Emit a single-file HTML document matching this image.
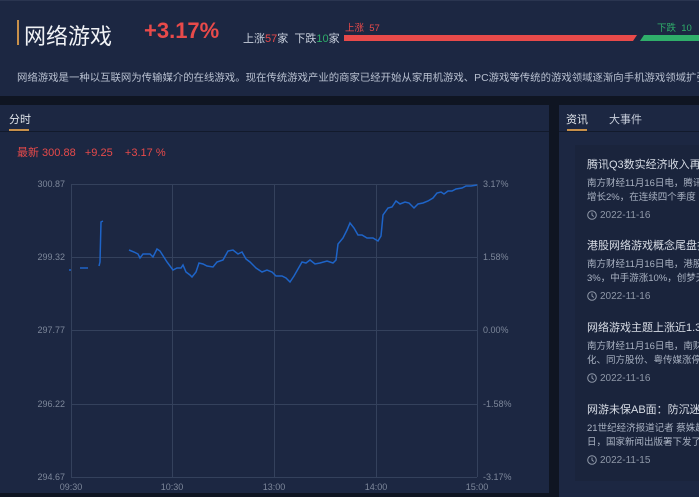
<!DOCTYPE html>
<html><head><meta charset="utf-8"><style>
*{margin:0;padding:0;box-sizing:border-box}
html,body{width:699px;height:497px;overflow:hidden}
body{background:#0f1522;font-family:"Liberation Sans","Noto Sans CJK SC",sans-serif;position:relative;color:#c8cfdc}
.a{position:absolute;white-space:nowrap}
#hdr{left:0;top:0;width:699px;height:96px;background:#1c2742;border-top:1px solid #2a3550}
#lp{left:0;top:105px;width:549px;height:388px;background:#1c2742}
#rp{left:559px;top:105px;width:140px;height:392px;background:#1c2742;overflow:hidden}
.card{left:575px;top:145px;width:124px;height:336px;background:#1a243c}
.t{font-size:11px;color:#d8dde6}
.s{font-size:9.5px;color:#a9b2c2;line-height:14px}
.d{font-size:10px;color:#8f98a8}
.d svg{vertical-align:-2px;margin-right:3px}
</style></head><body>
<div id="hdr" class="a"></div>
<div class="a" style="left:17px;top:20px;width:2px;height:25px;background:#c8904a"></div>
<div class="a" style="left:24px;top:19px;font-size:22px;color:#f0f2f5">网络游戏</div>
<div class="a" style="left:144px;top:18px;font-size:22px;font-weight:bold;color:#e84a4a">+3.17%</div>
<div class="a" style="left:243px;top:30px;font-size:11px;color:#c8cfdc">上涨<span style="color:#e84a4a">57</span>家 &nbsp;下跌<span style="color:#2fae6a">10</span>家</div>
<div class="a" style="left:345px;top:20px;font-size:9.5px;color:#e84a4a">上涨 &nbsp;57</div>
<div class="a" style="left:657px;top:20px;font-size:9.5px;color:#2fae6a">下跌 &nbsp;10</div>
<div class="a" style="left:344px;top:35px;width:293px;height:6px;background:#e84a4a;clip-path:polygon(0 0,100% 0,calc(100% - 4px) 100%,0 100%)"></div>
<div class="a" style="left:640px;top:35px;width:59px;height:6px;background:#2fae6a;clip-path:polygon(4px 0,100% 0,100% 100%,0 100%)"></div>
<div class="a" style="left:17px;top:69px;width:682px;overflow:hidden;font-size:10.4px;color:#b8c0d0">网络游戏是一种以互联网为传输媒介的在线游戏。现在传统游戏产业的商家已经开始从家用机游戏、PC游戏等传统的游戏领域逐渐向手机游戏领域扩张，</div>

<div id="lp" class="a"></div>
<div class="a" style="left:9px;top:111px;font-size:11px;color:#e0e4ea">分时</div>
<div class="a" style="left:9px;top:129px;width:20px;height:2px;background:#c8904a"></div>
<div class="a" style="left:0;top:131px;width:549px;height:1px;background:#121a2c"></div>
<div class="a" style="left:17px;top:144px;font-size:11px;color:#e84a4a">最新 300.88 &nbsp;&nbsp;+9.25 &nbsp;&nbsp;&nbsp;+3.17 %</div>
<svg class="a" style="left:0;top:0" width="549" height="497">
<g stroke="#34415c" stroke-width="1" fill="none">
<line x1="71" y1="184.5" x2="477" y2="184.5"/><line x1="71" y1="257.5" x2="477" y2="257.5"/><line x1="71" y1="330.5" x2="477" y2="330.5"/><line x1="71" y1="404.5" x2="477" y2="404.5"/><line x1="71" y1="477.5" x2="477" y2="477.5"/>
<line x1="71.5" y1="184" x2="71.5" y2="477"/><line x1="172.5" y1="184" x2="172.5" y2="477"/><line x1="274.5" y1="184" x2="274.5" y2="477"/><line x1="376.5" y1="184" x2="376.5" y2="477"/><line x1="477.5" y1="184" x2="477.5" y2="477"/>
</g>
<g stroke="#1e64c8" stroke-width="1.5" fill="none">
<path d="M80 268 L88 268"/>
<path d="M99 266 L100 262 L101 222 L103 221"/>
<path d="M129 250 L134 252 L138 254 L140 258 L143 254 L150 254 L153 257 L157 249 L160 251 L167 262 L173 270 L177 268 L181 268 L183 265 L186 272 L190 275 L192 277 L196 272 L199 263 L203 264 L207 266 L213 267 L217 262 L223 260 L228 251 L233 250 L238 254 L242 252 L246 259 L250 262 L256 268 L262 272 L267 270 L272 272 L276 276 L282 276 L286 278 L290 282 L294 276 L302 262 L306 263 L310 260 L315 264 L320 263 L327 261 L333 263 L336 260 L338 244 L343 238 L347 230 L350 223 L354 228 L358 235 L362 235 L367 238 L373 238 L378 241 L381 236 L383 215 L388 208 L392 207 L396 201 L400 204 L405 202 L409 203 L414 208 L418 204 L423 203 L428 201 L433 198 L437 193 L441 192 L444 194 L448 191 L452 191 L456 189 L462 188 L466 186 L471 186 L477 185"/>
</g>
<circle cx="70" cy="270" r="1" fill="#1e64c8"/>
<g font-size="9" fill="#7d879a" font-family="Liberation Sans,sans-serif">
<text x="65" y="187" text-anchor="end">300.87</text><text x="65" y="260" text-anchor="end">299.32</text><text x="65" y="333" text-anchor="end">297.77</text><text x="65" y="407" text-anchor="end">296.22</text><text x="65" y="480" text-anchor="end">294.67</text>
<text x="483" y="187">3.17%</text><text x="483" y="260">1.58%</text><text x="483" y="333">0.00%</text><text x="483" y="407">-1.58%</text><text x="483" y="480">-3.17%</text>
<text x="71" y="490" text-anchor="middle">09:30</text><text x="172" y="490" text-anchor="middle">10:30</text><text x="274" y="490" text-anchor="middle">13:00</text><text x="376" y="490" text-anchor="middle">14:00</text><text x="477" y="490" text-anchor="middle">15:00</text>
</g></svg>

<div id="rp" class="a"></div>
<div class="a" style="left:566px;top:111px;font-size:11px;color:#e0e4ea">资讯</div>
<div class="a" style="left:609px;top:111px;font-size:11px;color:#c8cfdc">大事件</div>
<div class="a" style="left:567px;top:129px;width:20px;height:2px;background:#c8904a"></div>
<div class="a" style="left:559px;top:131px;width:140px;height:1px;background:#121a2c"></div>
<div class="card a"></div>
<div class="a t" style="left:587px;top:156px">腾讯Q3数实经济收入再超</div>
<div class="a s" style="left:587px;top:177px">南方财经11月16日电，腾讯<br>增长2%，在连续四个季度</div>
<div class="a d" style="left:587px;top:210px"><svg width="10" height="10"><circle cx="5" cy="5" r="4.3" fill="none" stroke="#8f98a8"/><path d="M5 2.5V5L6.8 6.5" fill="none" stroke="#8f98a8"/></svg>2022-11-16</div>
<div class="a t" style="left:587px;top:237px">港股网络游戏概念尾盘拉</div>
<div class="a s" style="left:587px;top:258px">南方财经11月16日电，港股<br>3%，中手游涨10%，创梦天</div>
<div class="a d" style="left:587px;top:291px"><svg width="10" height="10"><circle cx="5" cy="5" r="4.3" fill="none" stroke="#8f98a8"/><path d="M5 2.5V5L6.8 6.5" fill="none" stroke="#8f98a8"/></svg>2022-11-16</div>
<div class="a t" style="left:587px;top:319px">网络游戏主题上涨近1.3%</div>
<div class="a s" style="left:587px;top:340px">南方财经11月16日电，南财<br>化、同方股份、粤传媒涨停</div>
<div class="a d" style="left:587px;top:373px"><svg width="10" height="10"><circle cx="5" cy="5" r="4.3" fill="none" stroke="#8f98a8"/><path d="M5 2.5V5L6.8 6.5" fill="none" stroke="#8f98a8"/></svg>2022-11-16</div>
<div class="a t" style="left:587px;top:401px">网游未保AB面：防沉迷新</div>
<div class="a s" style="left:587px;top:422px">21世纪经济报道记者 蔡姝越<br>日，国家新闻出版署下发了</div>
<div class="a d" style="left:587px;top:455px"><svg width="10" height="10"><circle cx="5" cy="5" r="4.3" fill="none" stroke="#8f98a8"/><path d="M5 2.5V5L6.8 6.5" fill="none" stroke="#8f98a8"/></svg>2022-11-15</div>
</body></html>
